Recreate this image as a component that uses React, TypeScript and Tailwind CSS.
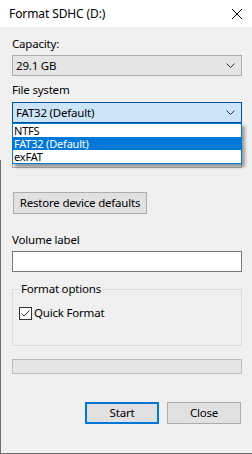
import React from "react";

const Chevron = () => (
  <svg width="9" height="5" viewBox="0 0 9 5" className="shrink-0">
    <path d="M0.5 0.5 L4.5 4.5 L8.5 0.5" fill="none" stroke="#333" strokeWidth="1" />
  </svg>
);

export default function App() {
  const font = { fontFamily: '"Noto Sans", "Open Sans", sans-serif' };
  return (
    <div
      className="relative w-[252px] h-[454px] bg-[#f0f0f0] text-[11.5px] tracking-[-0.2px] text-black border-b border-[#6d6d6d] overflow-hidden"
      style={font}
    >
      {/* left window edge */}
      <div className="absolute left-0 top-[160px] bottom-0 w-px bg-[#6d6d6d]" />

      {/* Title bar */}
      <div className="h-[27px] bg-white flex items-center justify-between pl-[9px] pr-[10px]">
        <span className="text-[12px] leading-[16px] tracking-[-0.1px] text-black">Format SDHC (D:)</span>
        <svg width="10" height="10" viewBox="0 0 10 10">
          <path d="M0 0 L10 10 M10 0 L0 10" stroke="#000" strokeWidth="1" />
        </svg>
      </div>

      <div className="relative flex flex-col pl-[12px] pr-[10px]">
        <div className="mt-[9px] h-[16px] leading-[16px]">Capacity:</div>
        <div className="mt-[3px] h-[21px] bg-[#e5e5e5] border border-[#adadad] flex items-center justify-between pl-[3px] pr-[6px]">
          <span className="leading-[16px]">29.1 GB</span>
          <Chevron />
        </div>

        <div className="mt-[6px] h-[16px] leading-[16px]">File system</div>
        <div className="relative mt-[4px]">
          <div className="h-[21px] bg-[#cce4f7] border border-[#005499] flex items-center justify-between pl-[3px] pr-[6px]">
            <span className="leading-[16px]">FAT32 (Default)</span>
            <Chevron />
          </div>
          {/* dropdown list */}
          <div className="absolute left-0 right-0 top-[21px] z-10 bg-white border border-[#0078d7] shadow-[3px_3px_3px_rgba(0,0,0,0.35)] flex flex-col text-[11px]">
            <div className="h-[13px] leading-[13px] pl-[1px] overflow-hidden">NTFS</div>
            <div className="h-[13px] leading-[13px] pl-[1px] overflow-hidden bg-[#0078d7] text-white">FAT32 (Default)</div>
            <div className="h-[13px] leading-[13px] pl-[1px] overflow-hidden">exFAT</div>
          </div>
        </div>

        {/* Allocation unit size (hidden behind the open list) */}
        <div className="mt-[5px] h-[16px]" />
        <div className="mt-[3px] h-[21px] bg-[#e5e5e5] border border-[#adadad]" />

        <div className="mt-[24px] ml-px w-[134px] h-[22px] bg-[#e1e1e1] border border-[#adadad] flex items-center justify-center">
          <span className="leading-[16px]">Restore device defaults</span>
        </div>

        <div className="mt-[18px] h-[16px] leading-[16px]">Volume label</div>
        <div className="mt-[3px] h-[21px] bg-white border border-[#7a7a7a]" />

        <div className="relative mt-[17px] h-[57px] border border-[#dcdcdc]">
          <span className="absolute left-[7px] top-[-9px] px-px bg-[#f0f0f0] leading-[16px]">Format options</span>
          <div className="flex items-center mt-[15px] ml-[6px] gap-[2px]">
            <div className="w-[13px] h-[13px] bg-white border border-[#333] flex items-center justify-center">
              <svg width="11" height="11" viewBox="0 0 11 11">
                <path d="M1.5 5.5 L4 8 L9.5 2.5" fill="none" stroke="#333" strokeWidth="1" />
              </svg>
            </div>
            <span className="leading-[16px]">Quick Format</span>
          </div>
        </div>

        <div className="mt-[13px] h-[15px] bg-[#e6e6e6] border border-[#bcbcbc]" />

        <div className="mt-[28px] flex justify-end gap-[8px] mr-px">
          <div className="w-[74px] h-[22px] bg-[#e1e1e1] border-2 border-[#0078d7] flex items-center justify-center">
            <span className="leading-[16px]">Start</span>
          </div>
          <div className="w-[74px] h-[22px] bg-[#e1e1e1] border border-[#adadad] flex items-center justify-center">
            <span className="leading-[16px]">Close</span>
          </div>
        </div>
      </div>
    </div>
  );
}
